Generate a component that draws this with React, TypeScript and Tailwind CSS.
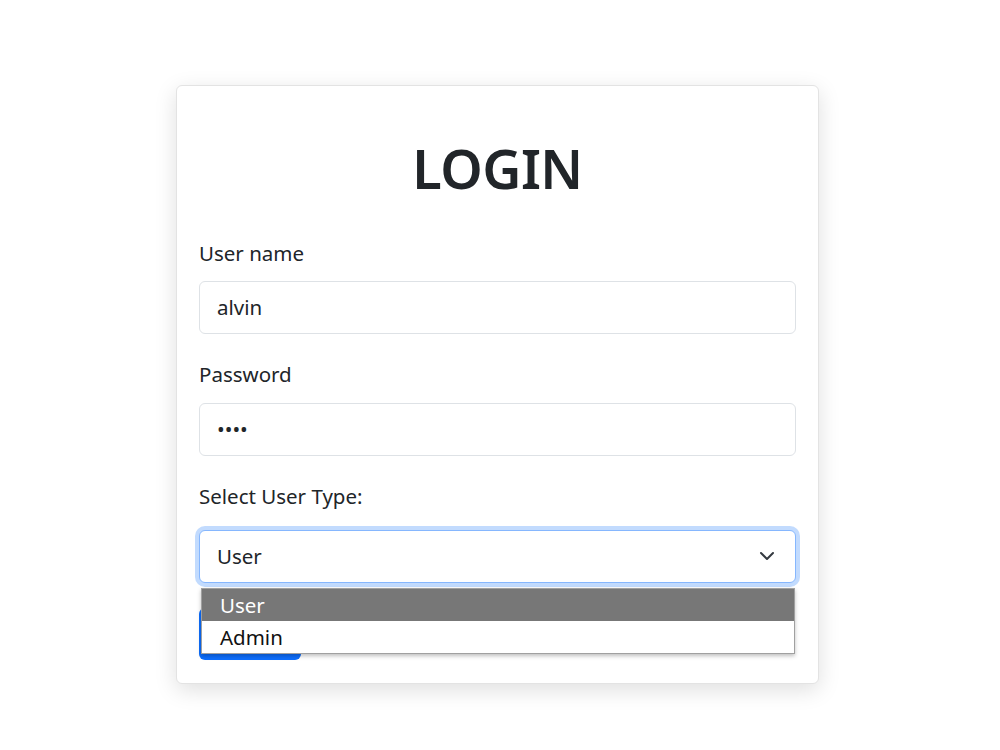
export default function App() {
  return (
    <div
      className="min-h-[750px] w-full bg-white flex justify-center pt-[85px] pr-[5px] text-[#212529]"
      style={{ fontFamily: '"Noto Sans", "Open Sans", sans-serif' }}
    >
      <div className="w-[643px] h-[599px] border border-[#e3e3e3] rounded-md bg-white shadow-[0_6px_22px_rgba(0,0,0,0.13)] px-[22px] pt-[23px] pb-6">
        <h1 className="text-[54px] leading-[1.2] font-semibold text-center tracking-[-0.5px] mt-[27px] mb-[37px]">LOGIN</h1>

        <div className="mb-[25px]">
          <label className="block text-[20.5px] leading-[30px] mb-[13px] mt-[3px]">User name</label>
          <input
            readOnly
            defaultValue="alvin"
            className="block w-full h-[53px] border border-[#dee2e6] rounded-md px-[17px] text-[20.5px] outline-none bg-white"
          />
        </div>

        <div className="mb-[25px]">
          <label className="block text-[20.5px] leading-[30px] mb-[14px]">Password</label>
          <input
            readOnly
            type="password"
            defaultValue="alvi"
            className="block w-full h-[53px] border border-[#dee2e6] rounded-md px-[17px] text-[20.5px] outline-none bg-white"
          />
        </div>

        <div>
          <label className="block text-[20.5px] leading-[30px] mb-[19px]">Select User Type:</label>
          <div className="relative">
            <div className="flex items-center justify-between h-[53px] border border-[#86b7fe] rounded-md pl-[17px] pr-[20px] text-[20.5px] bg-white shadow-[0_0_0_4px_rgba(13,110,253,0.25)]">
              <span>User</span>
              <svg width="16" height="16" viewBox="0 0 16 16" fill="none">
                <path d="m2 5 6 6 6-6" stroke="#343a40" strokeWidth="2" strokeLinecap="round" strokeLinejoin="round" />
              </svg>
            </div>

            {/* login button, hidden under the open dropdown */}
            <div className="h-[52px] w-[102px] mt-[25px] rounded-md bg-[#0d6efd]" />

            <div className="absolute left-[2px] right-[1px] top-[58px] bg-white border border-[#a0a0a0] shadow-[0_2px_4px_rgba(0,0,0,0.25)] text-[20.5px] leading-[32px]">
              <div className="bg-[#777777] text-white pl-[18px] h-[32px]">User</div>
              <div className="pl-[18px] h-[32px] text-[#111]">Admin</div>
            </div>
          </div>
        </div>
      </div>
    </div>
  );
}
